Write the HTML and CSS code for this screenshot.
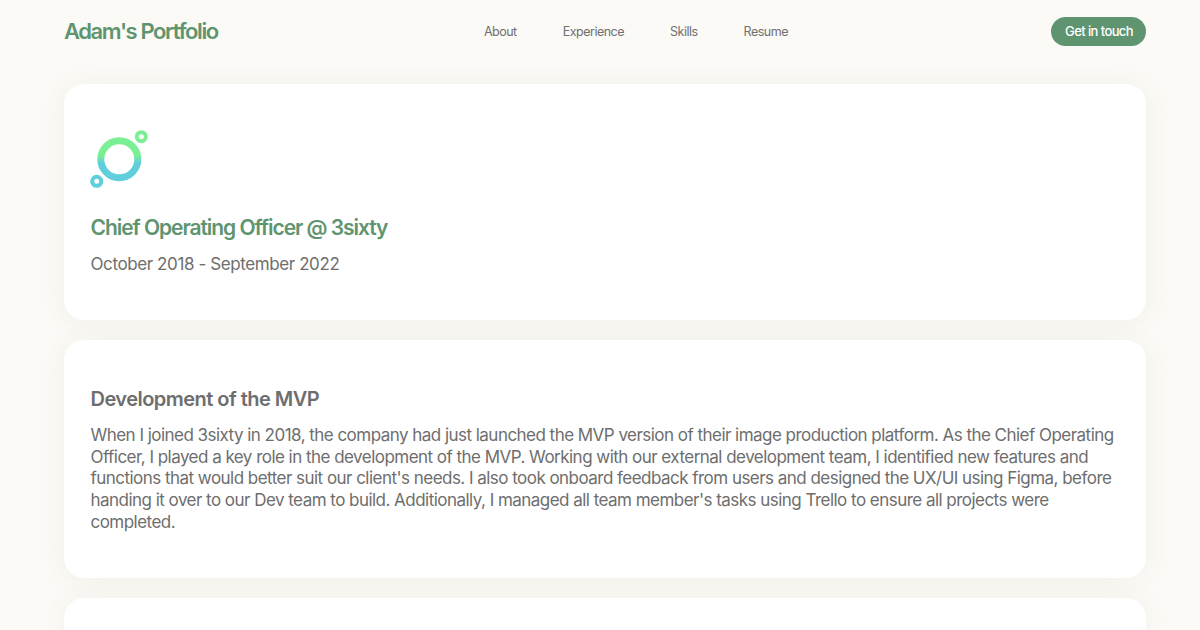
FILE: index.html
```html
<!DOCTYPE html>
<html lang="en">
<head>
    <meta charset="UTF-8">
    <meta name="viewport" content="width=device-width, initial-scale=1.0">
    <title>Adam's Portfolio</title>
    <link rel="stylesheet" href="styles.css">
</head>
<body>
    <header class="navbar">
        <a class="brand" href="#">Adam's Portfolio</a>
        <nav class="nav-links">
            <a href="#">About</a>
            <a href="#">Experience</a>
            <a href="#">Skills</a>
            <a href="#">Resume</a>
        </nav>
        <a class="contact-btn" href="#">Get in touch</a>
    </header>

    <main class="container">
        <section class="card card-intro">
            <svg class="company-logo" width="60" height="62" viewBox="0 0 60 62" aria-hidden="true">
                <defs>
                    <linearGradient id="ring" x1="0" y1="0" x2="0" y2="1">
                        <stop offset="0.4" stop-color="#7bef95"/>
                        <stop offset="0.6" stop-color="#60cfdc"/>
                    </linearGradient>
                </defs>
                <circle cx="29.3" cy="29.3" r="18.5" fill="none" stroke="url(#ring)" stroke-width="7"/>
                <circle cx="51.3" cy="6.7" r="4.5" fill="none" stroke="#7bef95" stroke-width="4"/>
                <circle cx="6.7" cy="51.3" r="4.5" fill="none" stroke="#60cfdc" stroke-width="4"/>
            </svg>
            <h1>Chief Operating Officer @ 3sixty</h1>
            <p class="dates">October 2018 - September 2022</p>
        </section>

        <section class="card card-text">
            <h2>Development of the MVP</h2>
            <p>When I joined 3sixty in 2018, the company had just launched the MVP version of their image production platform. As the Chief Operating Officer, I played a key role in the development of the MVP. Working with our external development team, I identified new features and functions that would better suit our client's needs. I also took onboard feedback from users and designed the UX/UI using Figma, before handing it over to our Dev team to build. Additionally, I managed all team member's tasks using Trello to ensure all projects were completed.</p>
        </section>

        <section class="card card-empty"></section>
    </main>
</body>
</html>
```

FILE: styles.css
```css
/* Page */
body {
    font-family: "Inter", "Liberation Sans", sans-serif;
    background-color: #fbfaf6;
    margin: 0;
    padding: 0;
    color: #6e6e6e;
    height: 630px;
    overflow: hidden;
}

a {
    text-decoration: none;
    color: inherit;
}

/* Top bar */
.navbar {
    display: flex;
    align-items: center;
    justify-content: space-between;
    height: 62px;
    padding: 0 54px 0 64px;
}

.brand {
    color: #5f9470;
    font-size: 22px;
    font-weight: 600;
    letter-spacing: -1.4px;
}

.nav-links {
    display: flex;
    gap: 46px;
    font-size: 12.5px;
    letter-spacing: -0.5px;
    color: #707070;
    margin-left: 3px;
}

.contact-btn {
    display: flex;
    align-items: center;
    height: 29px;
    padding: 0 13px 0 14px;
    border-radius: 15px;
    background-color: #5f9470;
    color: #fff;
    font-size: 13px;
    font-weight: 500;
    letter-spacing: -0.6px;
}

/* Cards */
.container {
    display: flex;
    flex-direction: column;
    gap: 20px;
    margin: 22px 54px 0 64px;
}

.card {
    background-color: #fff;
    border-radius: 20px;
    padding: 0 26px;
    box-shadow: 0 2px 24px rgba(110, 100, 70, 0.07);
}

.card-intro {
    height: 236px;
    padding-top: 46px;
    box-sizing: border-box;
}

.company-logo {
    display: block;
}

h1 {
    color: #5f9470;
    font-size: 21px;
    font-weight: 600;
    letter-spacing: -1.05px;
    line-height: 28px;
    margin: 22px 0 0 0.5px;
}

.dates {
    font-size: 17px;
    letter-spacing: -0.4px;
    line-height: 24px;
    margin: 10px 0 0 0.5px;
}

.card-text {
    height: 238px;
    padding-top: 46px;
    box-sizing: border-box;
}

h2 {
    font-size: 20px;
    font-weight: 600;
    letter-spacing: -0.53px;
    line-height: 26px;
    margin: 0 0 0 0.5px;
}

.card-text p {
    font-size: 17px;
    letter-spacing: -0.53px;
    line-height: 21.7px;
    margin: 13px 0 0 0.5px;
}

.card-empty {
    height: 32px;
    border-radius: 20px 20px 0 0;
}
```
